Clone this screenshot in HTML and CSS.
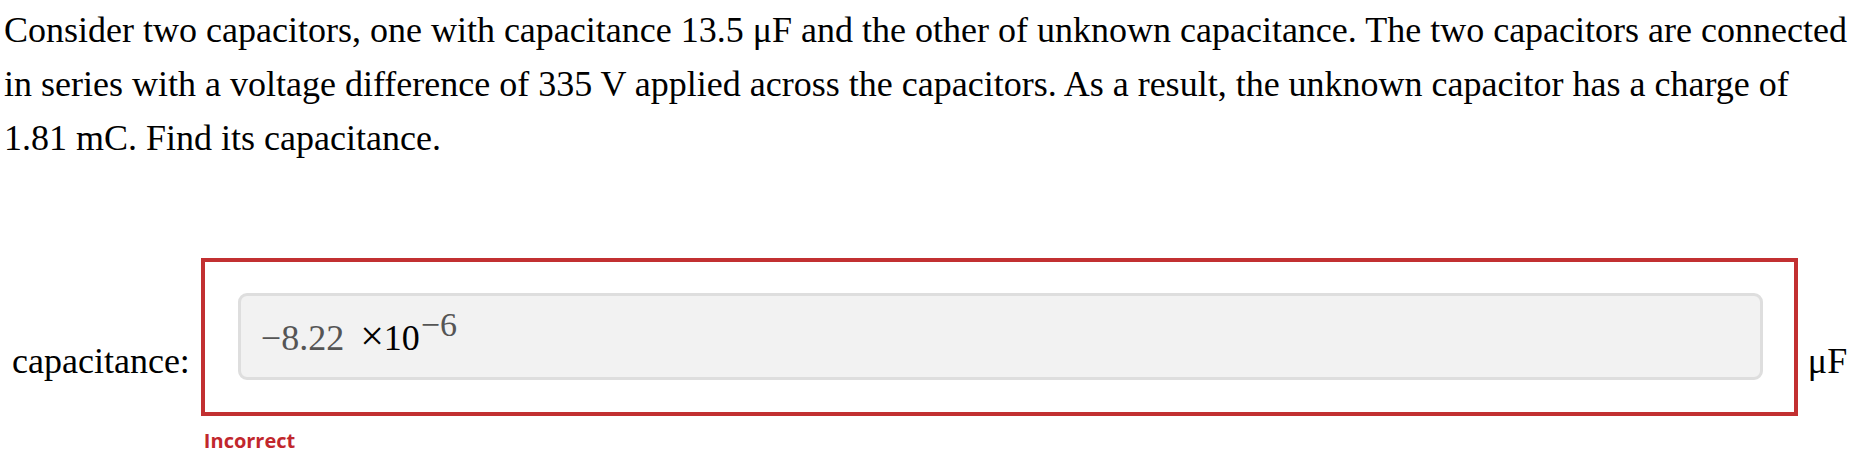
FILE: index.html
```html
<!DOCTYPE html>
<html>
<head>
<meta charset="utf-8">
<link rel="stylesheet" href="styles.css">
</head>
<body>
<div class="page">
  <p class="question">Consider two capacitors, one with capacitance 13.5 μF and the other of unknown capacitance. The two capacitors are connected in series with a voltage difference of 335 V applied across the capacitors. As a result, the unknown capacitor has a charge of 1.81 mC. Find its capacitance.</p>
  <div class="answer-row">
    <span class="label">capacitance:</span>
    <div class="answer-col">
      <div class="answer-box">
        <div class="input"><span class="val">−8.22</span><span class="times">×</span><span class="base">10</span><sup class="exp">−6</sup></div>
      </div>
      <div class="feedback">Incorrect</div>
    </div>
    <span class="unit">μF</span>
  </div>
</div>
</body>
</html>
```
FILE: styles.css
```css
html, body {
  margin: 0;
  padding: 0;
  background: #fff;
}
.page {
  padding: 3px 4px;
  font-family: "Liberation Serif", "Times New Roman", serif;
  color: #000;
}
.question {
  margin: 0;
  width: 1848px;
  font-size: 36px;
  line-height: 54px;
}
.answer-row {
  display: flex;
  align-items: flex-start;
  margin-top: 93px;
  padding-left: 8px;
}
.label {
  font-size: 36px;
  line-height: 54px;
  margin-top: 76px;
  margin-right: 11px;
}
.answer-col {
  display: flex;
  flex-direction: column;
}
.answer-box {
  box-sizing: border-box;
  width: 1597px;
  height: 158px;
  border: 4px solid #c23031;
  padding: 31px 31px 30px 33px;
}
.input {
  box-sizing: border-box;
  height: 87px;
  border: 3px solid #dedede;
  border-radius: 9px;
  background: #f2f2f2;
  padding: 0 20px;
  font-size: 36px;
  line-height: 84px;
  white-space: nowrap;
}
.val {
  color: #555;
}
.times {
  color: #000;
  margin-left: 16px;
  font-size: 42px;
  line-height: 0;
}
.base {
  color: #000;
}
.exp {
  color: #555;
  font-size: 34px;
  line-height: 0;
  vertical-align: 14px;
  margin-left: 1px;
}
.feedback {
  margin-top: 11px;
  padding-left: 3px;
  font-family: "Open Sans", "Liberation Sans", sans-serif;
  font-weight: 700;
  font-size: 20px;
  color: #c1272d;
}
.unit {
  font-size: 36px;
  line-height: 54px;
  margin-top: 76px;
  margin-left: 10px;
}
```
